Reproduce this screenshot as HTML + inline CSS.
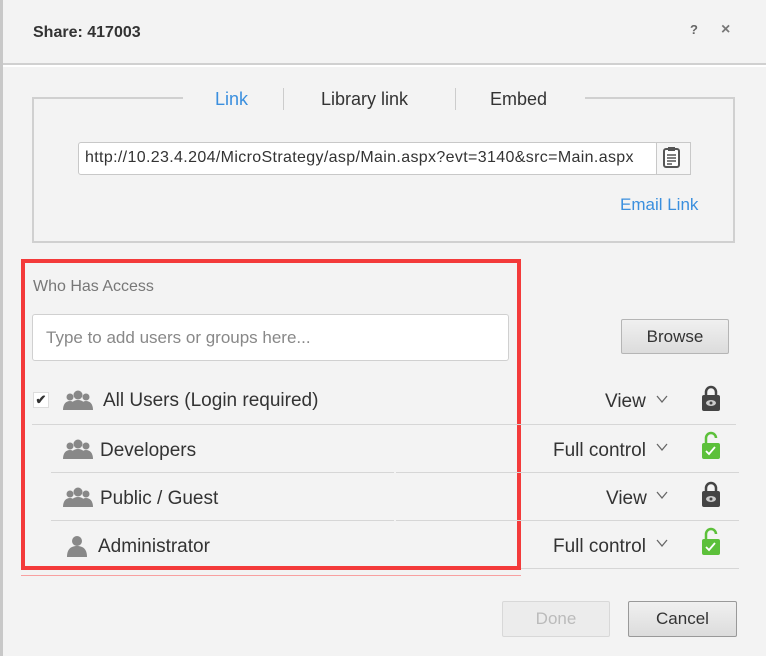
<!DOCTYPE html>
<html><head><style>
body{margin:0;width:766px;height:656px;background:#f3f3f3;font-family:"Liberation Sans",sans-serif;position:relative;overflow:hidden;color:#333}
.a{position:absolute;white-space:nowrap}
.line{position:absolute;height:1px;background:#d6d6d6}
.btn{position:absolute;border:1px solid #b5b5b5;border-radius:2px;background:linear-gradient(#f0f0f0,#dcdcdc);text-align:center;font-size:17px}
</style></head><body>
<div style="position:absolute;left:0;top:0;width:3px;height:656px;background:#c8c8c8"></div>
<div class="a" style="left:33px;top:24px;font-weight:bold;font-size:16px;color:#333">Share: 417003</div>
<div class="a" style="left:690px;top:22px;font-weight:bold;font-size:13px;color:#666">?</div>
<div class="a" style="left:721px;top:21px;font-weight:bold;font-size:16px;color:#777">×</div>
<div style="position:absolute;left:3px;top:63px;width:763px;height:2px;background:#d0d0d0"></div>
<div style="position:absolute;left:3px;top:65px;width:763px;height:2px;background:#fff"></div>
<div style="position:absolute;left:32px;top:97px;width:699px;height:142px;border:2px solid #d0d0d0"></div>
<div style="position:absolute;left:183px;top:90px;width:402px;height:20px;background:#f3f3f3"></div>
<div class="a" style="left:215px;top:89px;font-size:18px;color:#3a8fde">Link</div>
<div style="position:absolute;left:283px;top:88px;width:1px;height:22px;background:#ccc"></div>
<div class="a" style="left:321px;top:89px;font-size:18px">Library link</div>
<div style="position:absolute;left:455px;top:88px;width:1px;height:22px;background:#ccc"></div>
<div class="a" style="left:490px;top:89px;font-size:18px">Embed</div>
<div style="position:absolute;left:78px;top:142px;width:578px;height:31px;background:#fff;border:1px solid #c8c8c8;border-radius:3px;overflow:hidden"><div class="a" style="left:6px;top:6px;font-size:16px;letter-spacing:0.35px;color:#333">http://10.23.4.204/MicroStrategy/asp/Main.aspx?evt=3140&amp;src=Main.aspx</div></div>
<div style="position:absolute;left:656px;top:142px;width:33px;height:31px;border:1px solid #c8c8c8;background:#f6f6f6"></div>
<svg class="a" style="left:661px;top:146px" width="22" height="24"><rect x="3" y="3" width="15" height="18" rx="2" fill="#fff" stroke="#555" stroke-width="2"/><rect x="7" y="1" width="7" height="4" fill="#555"/><path d="M6 9h9M6 12h9M6 15h9M6 18h5" stroke="#555" stroke-width="1.5"/></svg>
<div class="a" style="left:620px;top:195px;font-size:17px;color:#3a8fde">Email Link</div>

<div style="position:absolute;left:21px;top:259px;width:492px;height:303px;border:4px solid #f33a3a"></div>
<div style="position:absolute;left:21px;top:575px;width:500px;height:1px;background:#f8a0a0"></div>
<div class="a" style="left:33px;top:278px;font-size:16px;color:#777">Who Has Access</div>
<div style="position:absolute;left:32px;top:314px;width:475px;height:45px;background:#fff;border:1px solid #d0d0d0;border-radius:3px"></div>
<div class="a" style="left:46px;top:328px;font-size:17px;color:#888">Type to add users or groups here...</div>
<div class="btn" style="left:621px;top:319px;width:106px;height:33px;line-height:33px">Browse</div>

<div style="position:absolute;left:33px;top:392px;width:14px;height:14px;border:1px solid #ddd;background:#fff;font-size:13px;line-height:14px;text-align:center;font-weight:bold">✔</div>
<svg class="a" style="left:62px;top:388px" width="32" height="24"><g fill="#888"><circle cx="16" cy="7" r="4.5"/><path d="M8 22c0-7 3-10 8-10s8 3 8 10z"/><circle cx="8" cy="9" r="3.5"/><path d="M1 22c0-6 3-9 7-9 2 0 3 1 3 1l-2 8z"/><circle cx="24" cy="9" r="3.5"/><path d="M31 22c0-6-3-9-7-9-2 0-3 1-3 1l2 8z"/></g></svg>
<div class="a" style="left:103px;top:390px;font-size:19px">All Users (Login required)</div>
<div class="line" style="left:32px;top:424px;width:704px"></div>

<svg class="a" style="left:62px;top:437px" width="32" height="24"><g fill="#888"><circle cx="16" cy="7" r="4.5"/><path d="M8 22c0-7 3-10 8-10s8 3 8 10z"/><circle cx="8" cy="9" r="3.5"/><path d="M1 22c0-6 3-9 7-9 2 0 3 1 3 1l-2 8z"/><circle cx="24" cy="9" r="3.5"/><path d="M31 22c0-6-3-9-7-9-2 0-3 1-3 1l2 8z"/></g></svg>
<div class="a" style="left:100px;top:440px;font-size:19px">Developers</div>
<div class="line" style="left:51px;top:472px;width:343px"></div><div class="line" style="left:396px;top:472px;width:343px"></div>

<svg class="a" style="left:62px;top:485px" width="32" height="24"><g fill="#888"><circle cx="16" cy="7" r="4.5"/><path d="M8 22c0-7 3-10 8-10s8 3 8 10z"/><circle cx="8" cy="9" r="3.5"/><path d="M1 22c0-6 3-9 7-9 2 0 3 1 3 1l-2 8z"/><circle cx="24" cy="9" r="3.5"/><path d="M31 22c0-6-3-9-7-9-2 0-3 1-3 1l2 8z"/></g></svg>
<div class="a" style="left:100px;top:488px;font-size:19px">Public / Guest</div>
<div class="line" style="left:51px;top:520px;width:343px"></div><div class="line" style="left:396px;top:520px;width:343px"></div>

<svg class="a" style="left:66px;top:534px" width="22" height="24"><g fill="#888"><circle cx="11" cy="7" r="5"/><path d="M1 23c0-8 4-11 10-11s10 3 10 11z"/></g></svg>
<div class="a" style="left:98px;top:536px;font-size:19px">Administrator</div>
<div class="line" style="left:521px;top:568px;width:218px"></div>

<div class="a" style="left:605px;top:391px;font-size:19px">View</div>
<div class="a" style="left:553px;top:440px;font-size:19px">Full control</div>
<div class="a" style="left:606px;top:488px;font-size:19px">View</div>
<div class="a" style="left:553px;top:536px;font-size:19px">Full control</div>
<svg class="a" style="left:655px;top:394px" width="14" height="170"><g fill="none" stroke="#666" stroke-width="1.3"><path d="M2 2l5 6 5-6"/><path d="M2 50l5 6 5-6"/><path d="M2 98l5 6 5-6"/><path d="M2 146l5 6 5-6"/></g></svg>
<svg class="a" style="left:700px;top:384px" width="24" height="180">
<g><path d="M6 12V8a5 5 0 0 1 10 0v4" fill="none" stroke="#444" stroke-width="2.5"/><rect x="2" y="11" width="18" height="16" rx="2" fill="#444"/><ellipse cx="11" cy="19" rx="5" ry="3" fill="#ccc"/><circle cx="11" cy="19" r="1.5" fill="#444"/></g>
<g transform="translate(0,48)"><path d="M6 12V6a5 5 0 0 1 10 0" fill="none" stroke="#5cc03a" stroke-width="2.5"/><rect x="2" y="11" width="18" height="16" rx="2" fill="#5cc03a"/><path d="M6 19l3 3 6-7" fill="none" stroke="#fff" stroke-width="1.8"/></g>
<g transform="translate(0,96)"><path d="M6 12V8a5 5 0 0 1 10 0v4" fill="none" stroke="#444" stroke-width="2.5"/><rect x="2" y="11" width="18" height="16" rx="2" fill="#444"/><ellipse cx="11" cy="19" rx="5" ry="3" fill="#ccc"/><circle cx="11" cy="19" r="1.5" fill="#444"/></g>
<g transform="translate(0,144)"><path d="M6 12V6a5 5 0 0 1 10 0" fill="none" stroke="#5cc03a" stroke-width="2.5"/><rect x="2" y="11" width="18" height="16" rx="2" fill="#5cc03a"/><path d="M6 19l3 3 6-7" fill="none" stroke="#fff" stroke-width="1.8"/></g>
</svg>

<div class="btn" style="left:502px;top:601px;width:106px;height:34px;line-height:34px;color:#bbb;background:#ececec;border-color:#d8d8d8">Done</div>
<div class="btn" style="left:628px;top:601px;width:107px;height:34px;line-height:34px;border-color:#999">Cancel</div>
</body></html>
